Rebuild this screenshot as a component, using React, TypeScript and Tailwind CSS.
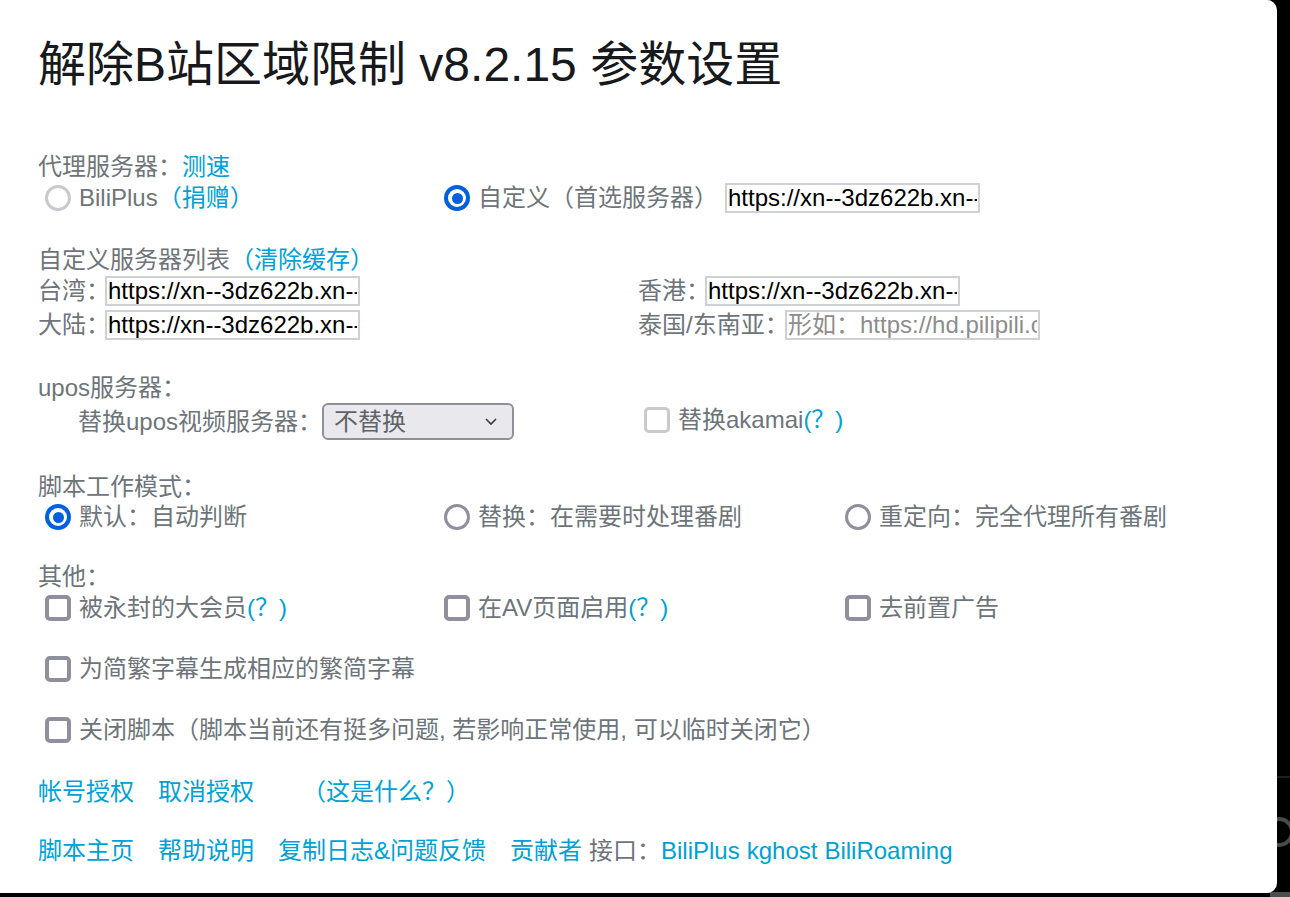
import React from 'react'

const Radio = ({ checked = false, light = false }: { checked?: boolean; light?: boolean }) =>
  checked ? (
    <span className="w-[26px] h-[26px] shrink-0 rounded-full bg-[#0060df] flex items-center justify-center">
      <span className="w-[18px] h-[18px] rounded-full bg-white flex items-center justify-center">
        <span className="w-[11px] h-[11px] rounded-full bg-[#0060df]" />
      </span>
    </span>
  ) : (
    <span
      className={
        'w-[26px] h-[26px] shrink-0 rounded-full border-[3px] ' +
        (light ? 'border-[#c9c9ce]' : 'border-[#8f8f9d]')
      }
    />
  )

const Check = ({ light = false }: { light?: boolean }) => (
  <span
    className={
      'w-[26px] h-[26px] shrink-0 rounded-[5px] ' +
      (light ? 'border-[3px] border-[#c9c9ce]' : 'border-[4px] border-[#8f8f9d]')
    }
  />
)

const Link = ({ children }: { children: React.ReactNode }) => (
  <a className="text-[#00a1d6] cursor-pointer">{children}</a>
)

const UrlInput = ({ value, placeholder }: { value?: string; placeholder?: string }) => (
  <input
    readOnly
    defaultValue={value}
    placeholder={placeholder}
    className="w-[255px] h-[30px] shrink-0 border-2 border-[#ced1d6] px-[1px] text-[24px] leading-[26px] text-black placeholder:text-[#8d8d8d] outline-none font-['Liberation_Sans','Noto_Sans_CJK_SC',sans-serif]"
  />
)

const URL = 'https://xn--3dz622b.xn--6qq986b3xl'

export default function App() {
  return (
    <div className="relative w-[1290px] h-[897px] bg-black overflow-hidden">
      {/* page behind the dialog */}
      <div className="absolute left-[1270px] top-[776px] w-[20px] h-[2px] bg-[#1f1f1f]" />
      <div className="absolute left-[1264px] top-[817px] w-[30px] h-[30px] rounded-full border-[4px] border-[#4a4a4a]" />
      <div className="absolute left-[1270px] top-[892px] w-[20px] h-[5px] bg-[#4d4d4d]" />

      <div className="relative z-10 w-[1277px] h-[893px] bg-white rounded-r-[10px] pl-[38px] pt-[37px] text-[#6d757a] text-[24px] leading-[30px] whitespace-nowrap font-['Liberation_Sans','Noto_Sans_CJK_SC',sans-serif]">
        <h1 className="text-[48px] leading-[56px] text-[#18191c]">解除B站区域限制 v8.2.15 参数设置</h1>

        {/* 代理服务器 */}
        <div className="mt-[59px]">
          <div>
            代理服务器：<Link>测速</Link>
          </div>
          <div className="grid grid-cols-[400px_auto] h-[30px] items-center mt-[1px]">
            <label className="flex items-center gap-[8px] pl-[7px]">
              <Radio light />
              <span>
                BiliPlus<Link>（捐赠）</Link>
              </span>
            </label>
            <label className="flex items-center gap-[8px] pl-[6px]">
              <Radio checked />
              <span className="w-[239px] shrink-0">自定义（首选服务器）</span>
              <UrlInput value={URL} />
            </label>
          </div>
        </div>

        {/* 自定义服务器列表 */}
        <div className="mt-[32px]">
          <div>
            自定义服务器列表<Link>（清除缓存）</Link>
          </div>
          <div className="grid grid-cols-[600px_auto] gap-y-[4px] mt-[1px]">
            <div className="flex items-center">
              <span className="w-[67px] shrink-0">台湾：</span>
              <UrlInput value={URL} />
            </div>
            <div className="flex items-center">
              <span className="w-[67px] shrink-0">香港：</span>
              <UrlInput value={URL} />
            </div>
            <div className="flex items-center">
              <span className="w-[67px] shrink-0">大陆：</span>
              <UrlInput value={URL} />
            </div>
            <div className="flex items-center">
              <span className="w-[147px] shrink-0">泰国/东南亚：</span>
              <UrlInput placeholder="形如：https://hd.pilipili.com" />
            </div>
          </div>
        </div>

        {/* upos */}
        <div className="mt-[33px]">
          <div>upos服务器：</div>
          <div className="grid grid-cols-[600px_auto] items-center">
            <div className="flex items-center pl-[40px]">
              <span className="w-[244px] shrink-0">替换upos视频服务器：</span>
              <div className="w-[192px] h-[37px] shrink-0 rounded-[6px] border-2 border-[#8f8f9d] bg-[#e9e9ed] flex items-center justify-between pl-[10px] pr-[14px] text-[#5f6368]">
                <span>不替换</span>
                <svg width="14" height="9" viewBox="0 0 14 9" fill="none">
                  <path d="M2 2 L7 7 L12 2" stroke="#3c3c3c" strokeWidth="1.6" />
                </svg>
              </div>
            </div>
            <label className="flex items-center gap-[8px] pl-[6px] -mt-[4px]">
              <Check light />
              <span>
                替换akamai<Link>(？)</Link>
              </span>
            </label>
          </div>
        </div>

        {/* 工作模式 */}
        <div className="mt-[32px]">
          <div>脚本工作模式：</div>
          <div className="grid grid-cols-[400px_400px_auto] h-[30px] items-center">
            <label className="flex items-center gap-[8px] pl-[7px]">
              <Radio checked />
              <span>默认：自动判断</span>
            </label>
            <label className="flex items-center gap-[8px] pl-[6px]">
              <Radio />
              <span>替换：在需要时处理番剧</span>
            </label>
            <label className="flex items-center gap-[8px] pl-[7px]">
              <Radio />
              <span>重定向：完全代理所有番剧</span>
            </label>
          </div>
        </div>

        {/* 其他 */}
        <div className="mt-[30px]">
          <div>其他：</div>
          <div className="grid grid-cols-[400px_400px_auto] h-[30px] items-center mt-[1px]">
            <label className="flex items-center gap-[8px] pl-[7px]">
              <Check />
              <span>
                被永封的大会员<Link>(？)</Link>
              </span>
            </label>
            <label className="flex items-center gap-[8px] pl-[6px]">
              <Check />
              <span>
                在AV页面启用<Link>(？)</Link>
              </span>
            </label>
            <label className="flex items-center gap-[8px] pl-[7px]">
              <Check />
              <span>去前置广告</span>
            </label>
          </div>
          <label className="flex items-center gap-[8px] pl-[7px] h-[30px] mt-[31px]">
            <Check />
            <span>为简繁字幕生成相应的繁简字幕</span>
          </label>
          <label className="flex items-center gap-[8px] pl-[7px] h-[30px] mt-[31px]">
            <Check />
            <span>关闭脚本（脚本当前还有挺多问题, 若影响正常使用, 可以临时关闭它）</span>
          </label>
        </div>

        {/* 授权 */}
        <div className="flex mt-[32px]">
          <Link>帐号授权</Link>
          <span className="ml-[24px]">
            <Link>取消授权</Link>
          </span>
          <span className="ml-[48px]">
            <Link>（这是什么？）</Link>
          </span>
        </div>

        <div className="flex mt-[29px]">
          <Link>脚本主页</Link>
          <span className="ml-[24px]">
            <Link>帮助说明</Link>
          </span>
          <span className="ml-[24px]">
            <Link>复制日志&amp;问题反馈</Link>
          </span>
          <span className="ml-[24px]">
            <Link>贡献者</Link>
          </span>
          <span className="ml-[7px]">接口：</span>
          <Link>BiliPlus</Link>
          <span className="w-[7px]" />
          <Link>kghost</Link>
          <span className="w-[7px]" />
          <Link>BiliRoaming</Link>
        </div>
      </div>
    </div>
  )
}
